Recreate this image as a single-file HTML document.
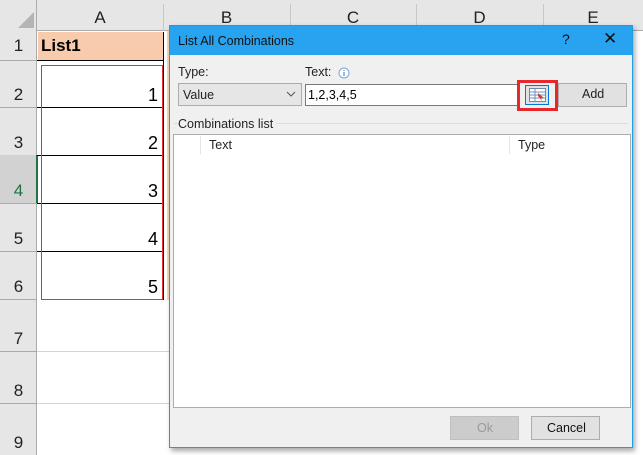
<!DOCTYPE html>
<html><head><style>
*{margin:0;padding:0;box-sizing:border-box}
body{width:643px;height:455px;overflow:hidden;background:#fff;position:relative;font-family:"Liberation Sans",sans-serif}
.a{position:absolute}
.hl{position:absolute;height:1px;background:#d4d4d4}
.vl{position:absolute;width:1px;background:#d4d4d4}
.ch{position:absolute;top:0;height:31px;font-size:17px;color:#222;text-align:center;line-height:36px}
.rh{position:absolute;left:0;width:37px;font-size:17px;color:#222;text-align:center}
.num{position:absolute;font-size:18px;color:#000}
.d{font-size:12.5px;color:#222}
</style></head><body>
<div class="a" style="left:0;top:0;width:643px;height:31px;background:#e6e6e6;border-bottom:1px solid #ababab"></div>
<div class="a" style="left:0;top:0;width:37px;height:455px;background:#e6e6e6;border-right:1px solid #ababab"></div>
<svg class="a" style="left:14px;top:10px" width="22" height="20"><polygon points="20,2 20,18 4,18" fill="#b4b4b4"/></svg>
<div class="ch" style="left:37px;width:126px">A</div>
<div class="ch" style="left:163px;width:127px">B</div>
<div class="ch" style="left:290px;width:126px">C</div>
<div class="ch" style="left:416px;width:127px">D</div>
<div class="ch" style="left:543px;width:100px">E</div>
<div class="vl" style="left:163px;top:4px;height:27px;background:#c8c8c8"></div>
<div class="vl" style="left:290px;top:4px;height:27px;background:#c8c8c8"></div>
<div class="vl" style="left:416px;top:4px;height:27px;background:#c8c8c8"></div>
<div class="vl" style="left:543px;top:4px;height:27px;background:#c8c8c8"></div>
<div class="a" style="left:0;top:155px;width:37px;height:48px;background:#d2d2d2"></div>
<div class="a" style="left:36px;top:155px;width:2px;height:48px;background:#217346"></div>
<div class="rh" style="top:36px">1</div>
<div class="rh" style="top:85px">2</div>
<div class="rh" style="top:133px">3</div>
<div class="rh" style="top:181px;color:#217346">4</div>
<div class="rh" style="top:229px">5</div>
<div class="rh" style="top:277px">6</div>
<div class="rh" style="top:329px">7</div>
<div class="rh" style="top:381px">8</div>
<div class="rh" style="top:433px">9</div>
<div class="hl" style="left:0;top:60px;width:37px;background:#ababab"></div>
<div class="hl" style="left:0;top:107px;width:37px;background:#ababab"></div>
<div class="hl" style="left:0;top:203px;width:37px;background:#ababab"></div>
<div class="hl" style="left:0;top:251px;width:37px;background:#ababab"></div>
<div class="hl" style="left:0;top:299px;width:37px;background:#ababab"></div>
<div class="hl" style="left:0;top:351px;width:37px;background:#ababab"></div>
<div class="hl" style="left:0;top:403px;width:37px;background:#ababab"></div>
<div class="a" style="left:38px;top:32px;width:125px;height:28px;background:#f8cbad"></div>
<div class="a" style="left:41px;top:36px;font-size:17px;font-weight:bold;color:#000">List1</div>
<div class="hl" style="left:37px;top:60px;width:126px;background:#000"></div>
<div class="hl" style="left:37px;top:107px;width:126px;background:#000"></div>
<div class="hl" style="left:37px;top:155px;width:126px;background:#000"></div>
<div class="hl" style="left:37px;top:203px;width:126px;background:#000"></div>
<div class="hl" style="left:37px;top:251px;width:126px;background:#000"></div>
<div class="hl" style="left:37px;top:351px;width:170px"></div>
<div class="hl" style="left:37px;top:403px;width:170px"></div>
<div class="vl" style="left:163px;top:32px;height:268px;background:#000"></div>
<div class="a" style="left:41px;top:65px;width:122px;height:235px;border:1px solid #e83030;z-index:2"></div>
<div class="num" style="top:85px;left:148px">1</div>
<div class="num" style="top:133px;left:148px">2</div>
<div class="num" style="top:181px;left:148px">3</div>
<div class="num" style="top:229px;left:148px">4</div>
<div class="num" style="top:277px;left:148px">5</div>
<div class="a" style="left:167px;top:30px;width:3px;height:270px;background:#f0c090;opacity:.6"></div>
<div class="a" style="left:169px;top:25px;width:464px;height:423px;background:#f0f0f0;border:1px solid #1e9be6;box-shadow:2px 3px 5px rgba(0,0,0,.35)"></div>
<div class="a" style="left:170px;top:26px;width:462px;height:29px;background:#27a3ef"></div>
<div class="a d" style="left:178px;top:34px;color:#111">List All Combinations</div>
<div class="a" style="left:562px;top:31px;font-size:14px;color:#111">?</div>
<div class="a" style="left:603px;top:29px;font-size:17px;color:#111">✕</div>
<div class="a d" style="left:178px;top:65px">Type:</div>
<div class="a" style="left:178px;top:83px;width:124px;height:23px;background:#e6e6e6;border:1px solid #acacac"></div>
<div class="a d" style="left:183px;top:88px">Value</div>
<svg class="a" style="left:286px;top:91px" width="10" height="6"><path d="M1 1 L5 5 L9 1" stroke="#555" fill="none"/></svg>
<div class="a d" style="left:305px;top:65px">Text:</div>
<svg class="a" style="left:338px;top:67px" width="12" height="12"><circle cx="6" cy="6" r="5" fill="#fff" stroke="#7aa6d8"/><rect x="5.5" y="5" width="1" height="4" fill="#3a78c0"/><rect x="5.5" y="3" width="1" height="1" fill="#3a78c0"/></svg>
<div class="a" style="left:305px;top:84px;width:213px;height:22px;background:#fff;border:1px solid #7a7a7a"></div>
<div class="a d" style="left:308px;top:88px;color:#000">1,2,3,4,5</div>
<div class="a" style="left:517px;top:80px;width:41px;height:31px;border:3px solid #e8272c"></div>
<div class="a" style="left:525px;top:85px;width:24px;height:20px;background:#e1e1e1;border:1px solid #0078d7"></div>
<svg class="a" style="left:529px;top:88px" width="17" height="14"><rect x="0.5" y="0.5" width="16" height="13" fill="#fff" stroke="#6a8ab0"/><path d="M1 4H16M1 7H16M1 10H16M6 1V13" stroke="#7090c0"/><path d="M9 5L15 10L12 10L13 13L9 8Z" fill="#d63a2a"/></svg>
<div class="a" style="left:558px;top:83px;width:69px;height:24px;background:#e1e1e1;border:1px solid #adadad"></div>
<div class="a d" style="left:582px;top:87px">Add</div>
<div class="a" style="left:174px;top:123px;width:454px;height:1px;background:#dcdcdc"></div>
<div class="a d" style="left:178px;top:117px;background:#f0f0f0;padding-right:3px">Combinations list</div>
<div class="a" style="left:173px;top:134px;width:458px;height:274px;background:#fff;border:1px solid #acacac"></div>
<div class="a" style="left:200px;top:136px;width:1px;height:18px;background:#e5e5e5"></div>
<div class="a" style="left:509px;top:136px;width:1px;height:18px;background:#e5e5e5"></div>
<div class="a d" style="left:209px;top:138px">Text</div>
<div class="a d" style="left:518px;top:138px">Type</div>
<div class="a" style="left:450px;top:416px;width:69px;height:24px;background:#cccccc;border:1px solid #bfbfbf"></div>
<div class="a d" style="left:477px;top:421px;color:#9a9a9a">Ok</div>
<div class="a" style="left:531px;top:416px;width:69px;height:24px;background:#e1e1e1;border:1px solid #adadad"></div>
<div class="a d" style="left:547px;top:421px;color:#111">Cancel</div>
</body></html>
